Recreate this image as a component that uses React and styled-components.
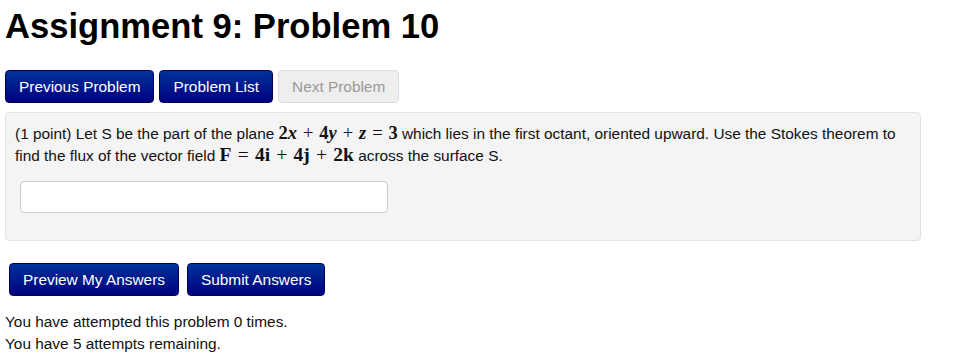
import React from 'react'
import styled, {createGlobalStyle, css} from 'styled-components'

const GlobalStyle = createGlobalStyle`
  body {
    margin: 0;
    background: #fff;
    color: #222;
    font-family: "Liberation Sans", Arial, sans-serif;
    font-size: 15.4px;
    line-height: 22px;
  }
`

const Page = styled.div`
  width: 926px;
  box-sizing: border-box;
  padding: 0 5px;
`

const Title = styled.h1`
  margin: 0;
  padding-top: 6px;
  font-size: 34.6px;
  line-height: 40px;
  font-weight: bold;
  color: #000;
`

const Nav = styled.div`
  display: flex;
  gap: 5px;
  margin-top: 24px;
`

const navyButton = css`
  background: linear-gradient(to bottom, #003399, #000080);
  border: 1px solid #00005e;
  color: #fff;
  cursor: pointer;
`

const Button = styled.button`
  font-family: inherit;
  font-size: 15.4px;
  line-height: 22px;
  padding: 4.5px 13px;
  border-radius: 4px;
  ${props => props.disabled
    ? css`
      background: #eeeeee;
      border: 1px solid #dcdcdc;
      color: #999;
    `
    : navyButton}
`

const Well = styled.div`
  margin-top: 9px;
  background: #f4f4f4;
  border: 1px solid #e3e3e3;
  border-radius: 4px;
  padding: 10px 9px 27px;
`

const Question = styled.div`
  color: #111;
`

const MathText = styled.span`
  font-family: "Liberation Serif", "Times New Roman", serif;
  font-size: ${props => props.big ? '19.5px' : '18.5px'};
  line-height: 0;
  font-weight: bold;
  white-space: nowrap;
`

const V = styled.i`
  font-weight: bold;
`

const Op = styled.span`
  font-weight: normal;
  margin: 0 0.32em;
`

const Answer = styled.input`
  display: block;
  margin: 14px 0 0 5px;
  width: 368px;
  height: 32px;
  box-sizing: border-box;
  background: #fff;
  border: 1px solid #cccccc;
  border-radius: 4px;
`

const Actions = styled.div`
  display: flex;
  gap: 8px;
  margin: 22px 0 0 4px;
`

const Status = styled.div`
  margin-top: 15px;
  color: #111;
`

export default function App() {
  return (
    <Page>
      <GlobalStyle/>
      <Title>Assignment 9: Problem 10</Title>
      <Nav>
        <Button>Previous Problem</Button>
        <Button>Problem List</Button>
        <Button disabled>Next Problem</Button>
      </Nav>
      <Well>
        <Question>
          (1 point) Let S be the part of the plane{' '}
          <MathText>2<V>x</V><Op>+</Op>4<V>y</V><Op>+</Op><V>z</V><Op>=</Op>3</MathText>{' '}
          which lies in the first octant, oriented upward. Use the Stokes theorem to find the flux of the vector field{' '}
          <MathText big>F<Op>=</Op>4i<Op>+</Op>4j<Op>+</Op>2k</MathText>{' '}
          across the surface S.
        </Question>
        <Answer type="text"/>
      </Well>
      <Actions>
        <Button>Preview My Answers</Button>
        <Button>Submit Answers</Button>
      </Actions>
      <Status>
        <div>You have attempted this problem 0 times.</div>
        <div>You have 5 attempts remaining.</div>
      </Status>
    </Page>
  )
}
